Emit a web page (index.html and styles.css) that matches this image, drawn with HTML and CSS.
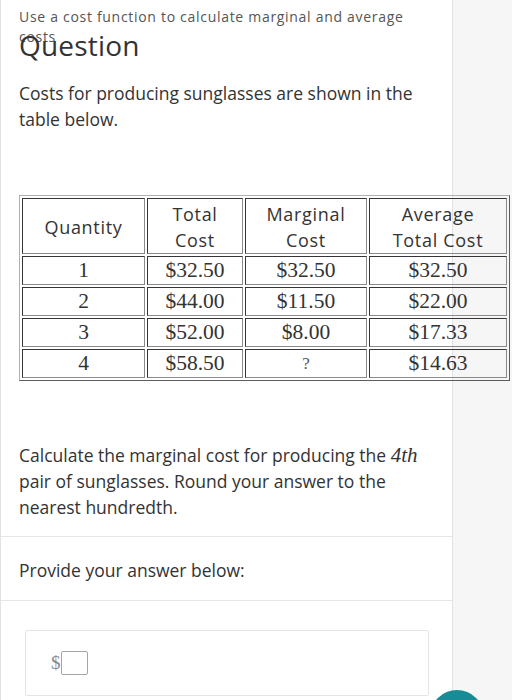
FILE: index.html
```html
<!DOCTYPE html>
<html>
<head>
<meta charset="utf-8">
<link rel="stylesheet" href="styles.css">
</head>
<body>
<div class="main">
  <div class="head">
    <div class="topic">Use a cost function to calculate marginal and average costs</div>
    <h1 class="title">Question</h1>
  </div>
  <div class="question">
    <p class="text">Costs for producing sunglasses are shown in the table below.</p>
    <table class="costs">
      <colgroup><col class="c1"><col class="c2"><col class="c3"><col class="c4"></colgroup>
      <tr class="hrow"><th>Quantity</th><th>Total<br>Cost</th><th>Marginal<br>Cost</th><th>Average<br>Total Cost</th></tr>
      <tr><td>1</td><td>$32.50</td><td>$32.50</td><td>$32.50</td></tr>
      <tr><td>2</td><td>$44.00</td><td>$11.50</td><td>$22.00</td></tr>
      <tr><td>3</td><td>$52.00</td><td>$8.00</td><td>$17.33</td></tr>
      <tr><td>4</td><td>$58.50</td><td class="q">?</td><td>$14.63</td></tr>
    </table>
    <p class="text ask">Calculate the marginal cost for producing the <span class="math">4th</span> pair of sunglasses. Round your answer to the nearest hundredth.</p>
  </div>
  <div class="section prompt">Provide your answer below:</div>
  <div class="section answer">
    <div class="answer-box">
      <span class="dollar">$</span><span class="blank"></span>
    </div>
  </div>
</div>
<div class="fab"></div>
</body>
</html>
```
FILE: styles.css
```css
html, body {
  margin: 0;
  padding: 0;
}
body {
  background: #f6f6f6;
  font-family: "Open Sans", "Liberation Sans", sans-serif;
  color: #333;
  height: 700px;
  overflow: hidden;
  position: relative;
}
.main {
  width: 453px;
  min-height: 700px;
  background: #fff;
  border-left: 1px solid #e2e2e2;
  border-right: 1px solid #e2e2e2;
  box-sizing: border-box;
}
.head {
  padding: 7px 18px 0;
}
.topic {
  height: 22px;
  font-size: 14px;
  line-height: 20px;
  color: #555;
  letter-spacing: 0.7px;
  width: 400px;
}
.title {
  margin: 0;
  font-size: 28px;
  font-weight: 400;
  line-height: 32px;
  color: #333;
  letter-spacing: 0.2px;
}
.question {
  padding: 19px 18px 16px;
}
.text {
  margin: 0;
  font-size: 17.5px;
  line-height: 26px;
  width: 414px;
}
.math {
  font-family: "Liberation Serif", serif;
  font-style: italic;
  font-size: 21px;
}
.costs {
  margin-top: 63px;
  table-layout: fixed;
  width: 491px;
  border: 1px outset #b0b0b0;
  border-spacing: 2px;
  background: transparent;
}
.c1 { width: 123px; }
.c2 { width: 96px; }
.c3 { width: 122px; }
.c4 { width: 138px; }
.costs th, .costs td {
  border: 1px inset #8a8a8a;
  padding: 0;
  text-align: center;
}
.costs th {
  font-weight: 400;
  font-size: 18px;
  letter-spacing: 0.7px;
  line-height: 26px;
  height: 53px;
  padding: 1px 0 0;
  color: #333;
  white-space: nowrap;
}
.costs td {
  font-family: "Liberation Serif", serif;
  font-size: 21.5px;
  line-height: 27px;
  height: 27px;
  color: #333;
}
.costs td.q {
  font-size: 17px;
  color: #555;
}
.ask {
  margin-top: 61px;
}
.section {
  border-top: 1px solid #e6e6e6;
}
.prompt {
  padding: 20px 18px 17px;
  font-size: 17.5px;
  line-height: 26px;
}
.answer {
  padding: 29px 0 0 24px;
}
.answer-box {
  width: 404px;
  height: 66px;
  box-sizing: border-box;
  border: 1px solid #e4e4e4;
  border-radius: 2px;
  display: flex;
  align-items: center;
  padding-left: 25px;
}
.dollar {
  font-family: "Liberation Serif", serif;
  font-size: 19px;
  color: #888;
  margin-right: 0;
}
.blank {
  width: 27px;
  height: 24px;
  box-sizing: border-box;
  border: 1px solid #a6a6a6;
  border-radius: 2px;
  background: #fff;
}
.fab {
  position: absolute;
  left: 430px;
  top: 690px;
  width: 54px;
  height: 54px;
  border-radius: 50%;
  background: #178c97;
}
```
